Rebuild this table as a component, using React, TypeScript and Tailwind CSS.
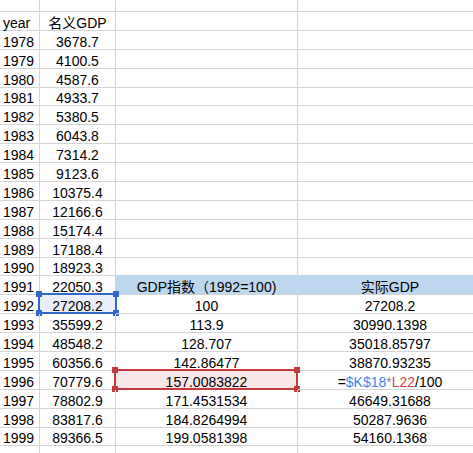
import React from 'react';

interface RowData {
  year: string;
  gdp: string;
  index?: string;
  real?: React.ReactNode;
}

const rows: RowData[] = [
  { year: '1978', gdp: '3678.7' },
  { year: '1979', gdp: '4100.5' },
  { year: '1980', gdp: '4587.6' },
  { year: '1981', gdp: '4933.7' },
  { year: '1982', gdp: '5380.5' },
  { year: '1983', gdp: '6043.8' },
  { year: '1984', gdp: '7314.2' },
  { year: '1985', gdp: '9123.6' },
  { year: '1986', gdp: '10375.4' },
  { year: '1987', gdp: '12166.6' },
  { year: '1988', gdp: '15174.4' },
  { year: '1989', gdp: '17188.4' },
  { year: '1990', gdp: '18923.3' },
  { year: '1991', gdp: '22050.3' },
  { year: '1992', gdp: '27208.2', index: '100', real: '27208.2' },
  { year: '1993', gdp: '35599.2', index: '113.9', real: '30990.1398' },
  { year: '1994', gdp: '48548.2', index: '128.707', real: '35018.85797' },
  { year: '1995', gdp: '60356.6', index: '142.86477', real: '38870.93235' },
  { year: '1996', gdp: '70779.6', index: '157.0083822' },
  { year: '1997', gdp: '78802.9', index: '171.4531534', real: '46649.31688' },
  { year: '1998', gdp: '83817.6', index: '184.8264994', real: '50287.9636' },
  { year: '1999', gdp: '89366.5', index: '199.0581398', real: '54160.1368' },
];

const cell = 'relative flex h-full items-end border-r border-b border-[#d4d4d4] leading-[14px] whitespace-nowrap';

function Handles({ color }: { color: string }) {
  return (
    <>
      <span className={`absolute -left-[4px] -top-[4px] h-[6px] w-[6px] ${color}`} />
      <span className={`absolute -right-[4px] -top-[4px] h-[6px] w-[6px] ${color}`} />
      <span className={`absolute -left-[4px] -bottom-[4px] h-[6px] w-[6px] ${color}`} />
      <span className={`absolute -right-[4px] -bottom-[4px] h-[6px] w-[6px] ${color}`} />
    </>
  );
}

function Formula() {
  return (
    <span>
      =<span className="text-[#4a82e6]">$K$18</span>
      <span className="text-[#8a7fb0]">*</span>
      <span className="text-[#d24a4a]">L22</span>/100
    </span>
  );
}

export default function App() {
  return (
    <div
      className="w-[473px] h-[453px] overflow-hidden bg-white text-[14px] text-black"
      style={{ fontFamily: '"Liberation Sans", "Noto Sans CJK SC", sans-serif' }}
    >
      <div className="w-[482px]">
        {/* partial row on top */}
        <div className="flex h-[12px]">
          <div className={`${cell} w-[40px]`} />
          <div className={`${cell} w-[76px]`} />
          <div className={`${cell} w-[182px]`} />
          <div className={`${cell} flex-1 border-r-0`} />
        </div>

        {/* header */}
        <div className="flex h-[18.9px]">
          <div className={`${cell} w-[40px] pl-[3px]`}>year</div>
          <div className={`${cell} w-[76px] justify-center`}>名义GDP</div>
          <div className={`${cell} w-[182px]`} />
          <div className={`${cell} flex-1 border-r-0`} />
        </div>

        {rows.map(r => {
          const isHead = r.year === '1991';
          const above = r.year === '1990';
          const pickB = r.year === '1992';
          const pickC = r.year === '1996';
          return (
            <div key={r.year} className="flex h-[18.9px]">
              <div className={`${cell} w-[40px] pl-[3px]`}>{r.year}</div>
              <div
                className={`${cell} w-[76px] justify-center ${isHead ? 'border-r-[#bdd7ee]' : ''} ${
                  pickB ? 'bg-[#e9eef8]' : ''
                }`}
              >
                {r.gdp}
                {pickB && (
                  <div className="absolute -left-[2px] -right-[2px] -top-[2px] -bottom-[1px] border-2 border-[#3069c9]">
                    <Handles color="bg-[#3069c9]" />
                  </div>
                )}
              </div>
              <div
                className={`${cell} w-[182px] justify-center ${
                  isHead ? 'bg-[#bdd7ee] border-[#bdd7ee]' : ''
                } ${above ? 'border-b-[#bdd7ee]' : ''} ${pickC ? 'bg-[#f8e6e6]' : ''}`}
              >
                {isHead ? 'GDP指数（1992=100)' : r.index}
                {pickC && (
                  <div className="absolute -left-[2px] -right-[1px] -top-[2px] -bottom-[1px] border-2 border-[#c23a3e]">
                    <Handles color="bg-[#c23a3e]" />
                  </div>
                )}
              </div>
              <div
                className={`${cell} flex-1 border-r-0 justify-center ${
                  isHead ? 'bg-[#bdd7ee] border-[#bdd7ee]' : ''
                } ${above ? 'border-b-[#bdd7ee]' : ''}`}
              >
                {isHead ? '实际GDP' : pickC ? <Formula /> : r.real}
              </div>
            </div>
          );
        })}

        {/* partial row at the bottom */}
        <div className="flex h-[12px]">
          <div className={`${cell} w-[40px]`} />
          <div className={`${cell} w-[76px]`} />
          <div className={`${cell} w-[182px]`} />
          <div className={`${cell} flex-1 border-r-0`} />
        </div>
      </div>
    </div>
  );
}
